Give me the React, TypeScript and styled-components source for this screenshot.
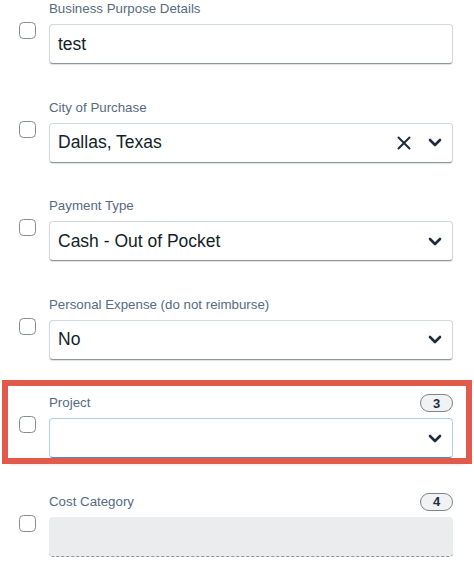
import React from "react";
import styled, { createGlobalStyle, css } from "styled-components";

const GlobalStyle = createGlobalStyle`
  html, body {
    margin: 0;
    padding: 0;
    background: #ffffff;
    overflow: hidden;
  }
  body {
    font-family: "Liberation Sans", Arial, sans-serif;
  }
`;

const Form = styled.div`
  display: flex;
  flex-direction: column;
  gap: 26.5px;
  margin-top: -8px;
`;

const Field = styled.div<{ $highlight?: boolean }>`
  margin: 0 8px;
  padding: 8px 13px 0 11px;
  display: flex;
  flex-direction: column;
  gap: 6px;
  ${(p) =>
    p.$highlight &&
    css`
      outline: 6px solid #e25a4b;
      box-shadow: 0 8px 3px -2px rgba(0, 0, 0, 0.18);
    `}
`;

const LabelRow = styled.div`
  height: 18px;
  display: flex;
  align-items: center;
  justify-content: space-between;
  margin-left: 30px;
`;

const Label = styled.span`
  font-size: 13.3px;
  color: #556b82;
  line-height: 16px;
`;

const Badge = styled.span`
  box-sizing: border-box;
  min-width: 33px;
  height: 18px;
  border: 1px solid #7d848b;
  border-radius: 9px;
  background: #f1f2f3;
  color: #1d2d3e;
  font-size: 13px;
  font-weight: bold;
  display: flex;
  align-items: center;
  justify-content: center;
`;

const InputRow = styled.div`
  display: flex;
  align-items: flex-start;
  gap: 13px;
`;

const Checkbox = styled.span`
  box-sizing: border-box;
  flex: none;
  width: 17px;
  height: 17px;
  margin-top: -2px;
  border: 1.5px solid #858b91;
  border-radius: 4.5px;
  background: #fff;
`;

type Variant = "normal" | "focus" | "disabled";

const Box = styled.div<{ $variant: Variant }>`
  box-sizing: border-box;
  flex: 1;
  height: 40px;
  border-radius: 4px;
  display: flex;
  align-items: center;
  padding: 0 10px 0 8px;
  ${(p) =>
    p.$variant === "normal" &&
    css`
      background: #fff;
      border: 1px solid #d3d8dc;
      border-bottom-color: #8d959d;
      box-shadow: 0 1px 1px rgba(0, 0, 0, 0.12);
    `}
  ${(p) =>
    p.$variant === "focus" &&
    css`
      background: #fff;
      border: 1px solid #b4cdef;
      border-bottom: 1.5px solid #4f8bdc;
    `}
  ${(p) =>
    p.$variant === "disabled" &&
    css`
      background: #eaecee;
      border: none;
      border-bottom: 1px dashed #8d959d;
    `}
`;

const Value = styled.span`
  flex: 1;
  font-size: 17.5px;
  color: #131e29;
`;

const Icons = styled.span`
  display: flex;
  align-items: center;
  gap: 17px;
`;

const Chevron = () => (
  <svg width="14" height="9" viewBox="0 0 14 9">
    <path
      d="M2 2 L7 7 L12 2"
      fill="none"
      stroke="#1d2d3e"
      strokeWidth="2.6"
      strokeLinecap="round"
      strokeLinejoin="round"
    />
  </svg>
);

const Clear = () => (
  <svg width="14" height="14" viewBox="0 0 14 14">
    <path
      d="M1.5 1.5 L12.5 12.5 M12.5 1.5 L1.5 12.5"
      fill="none"
      stroke="#1d2d3e"
      strokeWidth="2"
      strokeLinecap="round"
    />
  </svg>
);

type FieldDef = {
  label: string;
  value?: string;
  select?: boolean;
  clear?: boolean;
  badge?: string;
  variant?: Variant;
  highlight?: boolean;
};

const fields: FieldDef[] = [
  { label: "Business Purpose Details", value: "test" },
  { label: "City of Purchase", value: "Dallas, Texas", select: true, clear: true },
  { label: "Payment Type", value: "Cash - Out of Pocket", select: true },
  { label: "Personal Expense (do not reimburse)", value: "No", select: true },
  { label: "Project", badge: "3", select: true, variant: "focus", highlight: true },
  { label: "Cost Category", badge: "4", variant: "disabled" },
];

export default function App() {
  return (
    <>
      <GlobalStyle />
      <Form>
        {fields.map((f) => (
          <Field key={f.label} $highlight={f.highlight}>
            <LabelRow>
              <Label>{f.label}</Label>
              {f.badge && <Badge>{f.badge}</Badge>}
            </LabelRow>
            <InputRow>
              <Checkbox />
              <Box $variant={f.variant ?? "normal"}>
                <Value>{f.value}</Value>
                {f.select && (
                  <Icons>
                    {f.clear && <Clear />}
                    <Chevron />
                  </Icons>
                )}
              </Box>
            </InputRow>
          </Field>
        ))}
      </Form>
    </>
  );
}
